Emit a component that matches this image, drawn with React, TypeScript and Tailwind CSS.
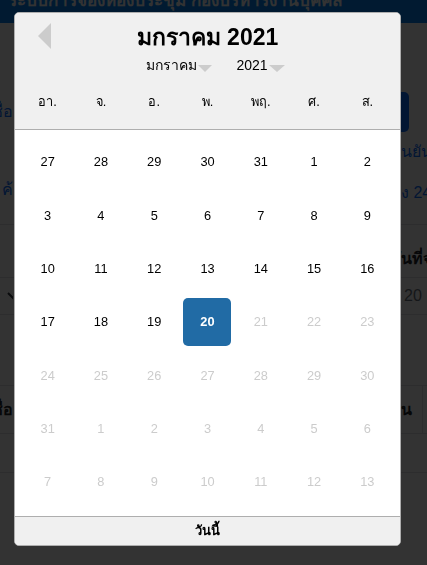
const weekDays = ["อา.", "จ.", "อ.", "พ.", "พฤ.", "ศ.", "ส."];

type Day = { label: number; selected: boolean; disabled: boolean };

const buildDays = (): Day[] => {
    const labels: number[] = [];
    for (let d = 27; d <= 31; d++) labels.push(d);
    for (let d = 1; d <= 31; d++) labels.push(d);
    for (let d = 1; d <= 13; d++) labels.push(d);
    // index 24 = 20 Jan 2021 (today / max date)
    return labels.map((label, i) => ({
        label,
        selected: i === 24,
        disabled: i > 24,
    }));
};

const Background = () => {
    return (
        <div className="min-h-screen bg-white font-['Liberation_Sans',sans-serif]">
            <div className="h-[23px] bg-[#0584f5] overflow-hidden">
                <p className="-mt-[12px] pl-[8px] text-[17px] font-bold text-white whitespace-nowrap">
                    ระบบการจองห้องประชุม กองบริหารงานบุคคล
                </p>
            </div>
            <div className="h-[69px]" />
            <div className="grid grid-cols-[13px_1fr_26px] h-[40px]">
                <div className="flex justify-end items-center overflow-hidden">
                    <span className="text-[16px] text-[#0d6efd] whitespace-nowrap">ชื่อ</span>
                </div>
                <div />
                <div className="flex overflow-hidden">
                    <div className="w-[8px] h-full bg-[#0d6efd] rounded-r-[5px]" />
                </div>
            </div>
            <div className="grid grid-cols-[13px_1fr_26px] h-[40px]">
                <div />
                <div />
                <div className="flex items-center overflow-hidden">
                    <span className="text-[16px] text-[#0d6efd] whitespace-nowrap">นยันการจอง</span>
                </div>
            </div>
            <div className="grid grid-cols-[13px_1fr_26px] h-[53px] border-b border-[#dee2e6]">
                <div className="flex justify-end pt-[6px] overflow-hidden">
                    <span className="text-[16px] leading-[24px] text-[#0d6efd] whitespace-nowrap">ค้</span>
                </div>
                <div />
                <div className="flex pt-[9px] overflow-hidden">
                    <span className="text-[16px] leading-[24px] text-[#0d6efd] whitespace-nowrap">ง 24</span>
                </div>
            </div>
            <div className="grid grid-cols-[13px_1fr_26px] h-[53px] border-b border-[#dee2e6]">
                <div />
                <div />
                <div className="flex pt-[22px] overflow-hidden">
                    <span className="text-[16px] leading-[24px] font-bold text-[#212529] whitespace-nowrap">ันที่จอง</span>
                </div>
            </div>
            <div className="grid grid-cols-[13px_1fr_26px] h-[37px] border-b border-[#dee2e6]">
                <div className="flex items-center overflow-hidden pl-[7px]">
                    <svg width="12" height="8" viewBox="0 0 12 8" className="shrink-0">
                        <path d="M1 1 L6 6 L11 1" fill="none" stroke="#343a40" strokeWidth="2" />
                    </svg>
                </div>
                <div />
                <div className="flex items-center overflow-hidden pl-[3px]">
                    <span className="text-[16px] text-[#6c757d] whitespace-nowrap">20</span>
                </div>
            </div>
            <div className="h-[71px] border-b border-[#dee2e6]" />
            <div className="grid grid-cols-[13px_1fr_26px] h-[48px] border-b border-[#dee2e6]">
                <div className="flex justify-end items-center overflow-hidden">
                    <span className="text-[16px] font-bold text-[#212529] whitespace-nowrap">ชื่อ</span>
                </div>
                <div />
                <div className="flex overflow-hidden">
                    <div className="w-[21px] flex items-center">
                        <span className="text-[16px] font-bold text-[#212529]">น</span>
                    </div>
                    <div className="flex-1 border-l border-[#dee2e6]" />
                </div>
            </div>
            <div className="h-[39px] border-b border-[#dee2e6]" />
        </div>
    );
};

const DatePicker = () => {
    const days = buildDays();
    return (
        <div className="w-[387px] bg-white border border-[#aeaeae] rounded-[5px] overflow-hidden font-['Liberation_Sans',sans-serif] text-black">
            <div className="relative bg-[#f0f0f0] border-b border-[#aeaeae] pt-[8px] pb-[3px] text-center">
                <div className="absolute left-[23px] top-[10px] w-0 h-0 border-y-[13px] border-y-transparent border-r-[13px] border-r-[#ccc]" />
                <div className="text-[23px] font-bold leading-[33px]">มกราคม 2021</div>
                <div className="flex justify-center items-center h-[23px] gap-[24px] pl-[16px] text-[14px] leading-[23px]">
                    <div className="flex items-center">
                        <span>มกราคม</span>
                        <span className="ml-[1px] mt-[6px] w-0 h-0 border-x-[7px] border-x-transparent border-t-[7px] border-t-[#ccc]" />
                    </div>
                    <div className="flex items-center">
                        <span>2021</span>
                        <span className="ml-[1px] mt-[6px] w-0 h-0 border-x-[8px] border-x-transparent border-t-[7px] border-t-[#ccc]" />
                    </div>
                </div>
                <div className="mt-[1px] grid grid-cols-7 px-[6px] h-[48px] leading-[48px] text-[12.8px]">
                    {weekDays.map((w) => (
                        <div key={w}>{w}</div>
                    ))}
                </div>
            </div>
            <div className="grid grid-cols-7 auto-rows-[53.33px] px-[6px] pt-[5.33px] pb-[7.33px] text-[12.8px]">
                {days.map((day, i) => (
                    <div key={i} className="flex items-center justify-center">
                        {day.selected ? (
                            <span className="w-[48px] h-[48px] rounded-[5px] bg-[#216ba5] text-white font-bold flex items-center justify-center">
                                {day.label}
                            </span>
                        ) : (
                            <span className={day.disabled ? "text-[#ccc]" : "text-black"}>{day.label}</span>
                        )}
                    </div>
                ))}
            </div>
            <div className="h-[29px] bg-[#f0f0f0] border-t border-[#aeaeae] flex items-center justify-center text-[13px] font-bold">
                วันนี้
            </div>
        </div>
    );
};

export default function App() {
    return (
        <div className="relative">
            <Background />
            <div className="fixed inset-0 bg-black/80 pl-[14px] pt-[12px]">
                <DatePicker />
            </div>
        </div>
    );
}
